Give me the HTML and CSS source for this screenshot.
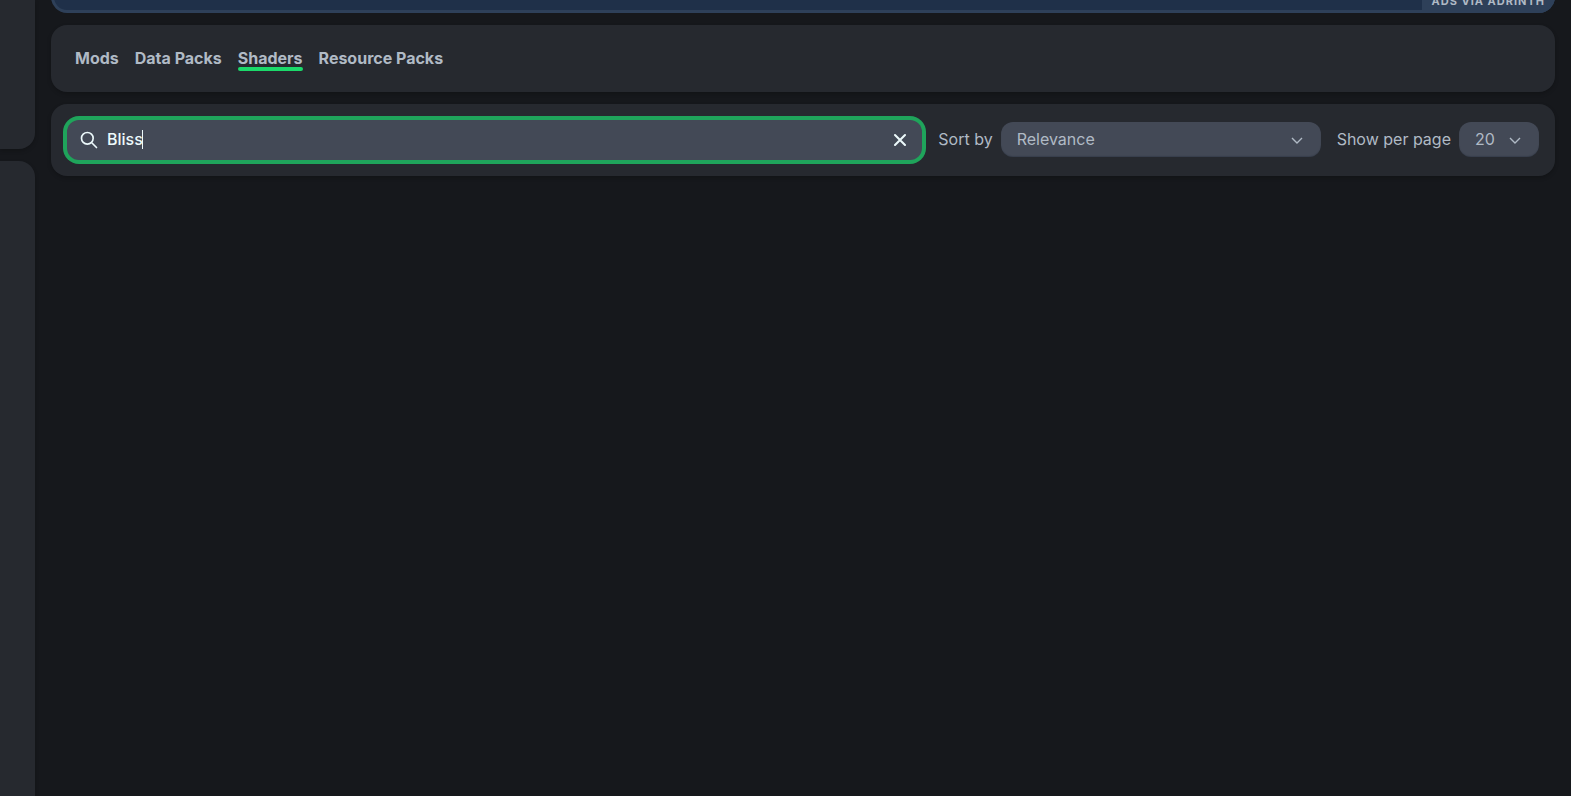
FILE: index.html
```
<!DOCTYPE html>
<html lang="en">
<head>
    <meta charset="UTF-8">
    <meta name="viewport" content="width=device-width, initial-scale=1.0">
    <title>Search shaders</title>
    <link rel="stylesheet" href="styles.css">
</head>
<body>
    <div class="page">
        <aside class="sidebar">
            <div class="card sidebar-top"></div>
            <div class="card sidebar-filters"></div>
        </aside>

        <main class="content">
            <div class="ad">
                <a class="ad-label" href="#">Ads via Adrinth</a>
            </div>

            <nav class="card tabs">
                <a class="tab" href="#">Mods</a>
                <a class="tab" href="#">Data Packs</a>
                <a class="tab active" href="#">Shaders</a>
                <a class="tab" href="#">Resource Packs</a>
            </nav>

            <form class="card search-controls">
                <div class="search-box">
                    <svg class="icon" viewBox="0 0 24 24" aria-hidden="true">
                        <path d="m21 21-6-6m2-5a7 7 0 1 1-14 0 7 7 0 0 1 14 0z"/>
                    </svg>
                    <input type="text" class="search-input" aria-label="Search shaders" value="Bliss" autocomplete="off" spellcheck="false">
                    <span class="caret"></span>
                    <button type="button" class="clear-btn" aria-label="Clear search">
                        <svg class="icon" viewBox="0 0 24 24" aria-hidden="true">
                            <path d="M18 6 6 18M6 6l12 12"/>
                        </svg>
                    </button>
                </div>

                <div class="field">
                    <label for="sort">Sort by</label>
                    <div class="dropdown dropdown-sort">
                        <select id="sort">
                            <option>Relevance</option>
                        </select>
                        <svg class="chevron" viewBox="0 0 12 8" aria-hidden="true"><path d="m1 1 5 5 5-5"/></svg>
                    </div>
                </div>

                <div class="field">
                    <label for="per-page">Show per page</label>
                    <div class="dropdown dropdown-count">
                        <select id="per-page">
                            <option>20</option>
                        </select>
                        <svg class="chevron" viewBox="0 0 12 8" aria-hidden="true"><path d="m1 1 5 5 5-5"/></svg>
                    </div>
                </div>
            </form>
        </main>
    </div>
</body>
</html>
```
FILE: styles.css
```
* {
    margin: 0;
    padding: 0;
    box-sizing: border-box;
}

body {
    font-family: Inter, sans-serif;
    font-size: 16px;
    line-height: 20px;
    background: #16181c;
    color: #b0bac5;
}

.page {
    display: flex;
    gap: 16px;
    height: 100vh;
    padding-right: 16px;
    overflow: hidden;
}

.card {
    background: #26292f;
    border-radius: 16px;
    box-shadow: 0 2px 4px rgba(0, 0, 0, 0.2);
}

/* Sidebar */
.sidebar {
    display: flex;
    flex-direction: column;
    gap: 12px;
    flex: 0 0 35px;
}

.sidebar-top {
    height: 149px;
    border-radius: 0 0 16px 0;
}

.sidebar-filters {
    flex: 1;
    border-radius: 0 16px 0 0;
}

/* Content */
.content {
    display: flex;
    flex-direction: column;
    gap: 12px;
    flex: 1;
    min-width: 0;
    margin-top: -77px;
}

.ad {
    position: relative;
    height: 90px;
    background: #1f3049;
    border: 3px solid #2e4059;
    border-radius: 16px;
}

.ad-label {
    position: absolute;
    right: -3px;
    bottom: -3px;
    padding: 4px 10px;
    background: #2e4059;
    border-radius: 8px 0 16px 0;
    color: #b0bac5;
    font-size: 11px;
    font-weight: 700;
    line-height: 16px;
    letter-spacing: 1px;
    text-transform: uppercase;
    text-decoration: none;
}

.tabs {
    display: flex;
    gap: 16px;
    padding: 23px 24px 24px;
}

.tab {
    position: relative;
    color: #b0bac5;
    font-weight: 700;
    text-decoration: none;
}

.tab.active::after {
    content: "";
    position: absolute;
    left: 0;
    right: 0;
    bottom: -3px;
    height: 4px;
    border-radius: 4px;
    background: #1bd96a;
}

/* Search row */
.search-controls {
    display: flex;
    align-items: center;
    gap: 16px;
    padding: 16px;
}

.search-box {
    position: relative;
    display: flex;
    align-items: center;
    gap: 8px;
    flex: 1;
    min-width: 0;
    height: 40px;
    padding: 0 12px;
    background: #434956;
    border-radius: 12px;
    box-shadow: 0 0 0 4px #1fa45b;
    color: #ecf9fb;
}

.icon {
    display: block;
    flex: none;
    width: 20px;
    height: 20px;
    fill: none;
    stroke: currentColor;
    stroke-width: 2;
    stroke-linecap: round;
    stroke-linejoin: round;
}

.search-input {
    flex: 1;
    min-width: 0;
    height: 40px;
    padding-bottom: 2px;
    border: none;
    outline: none;
    background: none;
    color: #ecf9fb;
    font: inherit;
    font-weight: 500;
}

.caret {
    position: absolute;
    top: 10px;
    left: 75px;
    width: 1px;
    height: 19px;
    background: #ecf9fb;
}

.clear-btn {
    border: none;
    background: none;
    color: inherit;
    cursor: pointer;
}

.clear-btn .icon {
    stroke-width: 2.5;
}

.field {
    display: flex;
    align-items: center;
    gap: 8px;
    padding-bottom: 2px;
}

.dropdown {
    position: relative;
}

.dropdown-sort {
    width: 320px;
}

.dropdown-count {
    width: 80px;
}

.dropdown select {
    display: block;
    width: 100%;
    height: 35px;
    padding: 0 16px;
    appearance: none;
    border: none;
    border-radius: 12px;
    background: #434956;
    box-shadow: inset 0 -1px 1px rgba(17, 24, 39, 0.2);
    color: #b0bac5;
    font: inherit;
    cursor: pointer;
}

.chevron {
    position: absolute;
    top: 15px;
    right: 18px;
    width: 12px;
    height: 8px;
    fill: none;
    stroke: #b0bac5;
    stroke-width: 1.4;
    pointer-events: none;
}
```
